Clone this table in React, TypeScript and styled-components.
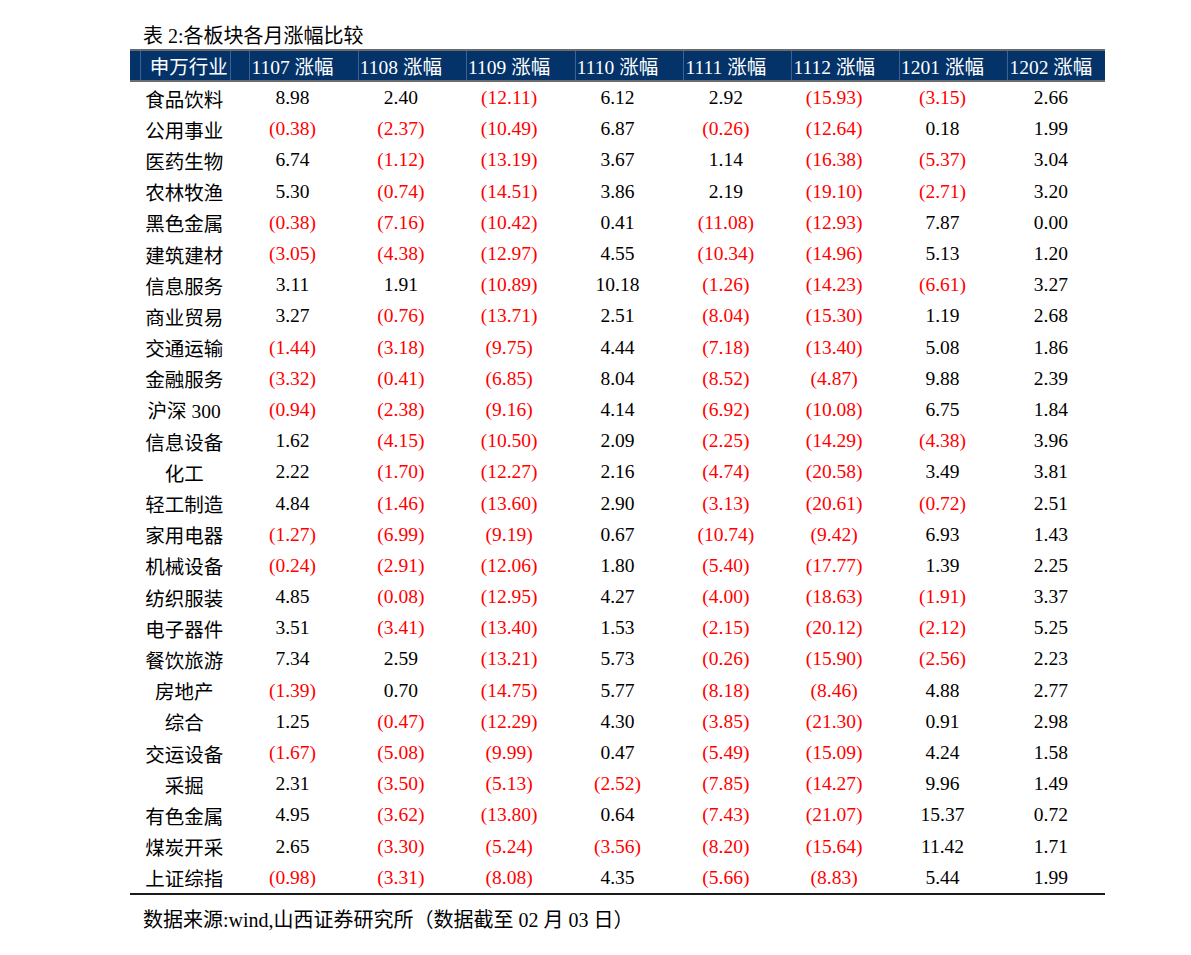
import styled, { createGlobalStyle } from "styled-components";

const GlobalStyle = createGlobalStyle`
  html, body {
    margin: 0;
    padding: 0;
    background: #ffffff;
  }
`;

const FONT = `"Liberation Serif", "Noto Sans CJK SC", serif`;

const Page = styled.div`
  width: 1191px;
  height: 955px;
  box-sizing: border-box;
  padding: 24px 0 0 130px;
  font-family: ${FONT};
  color: #000;
`;

const Title = styled.div`
  padding-left: 13px;
  font-size: 20px;
  line-height: 25px;
  height: 25px;
`;

const Table = styled.div`
  width: 975px;
  border-bottom: 2px solid #1a1a1a;
`;

const HeaderRow = styled.div`
  display: grid;
  grid-template-columns: repeat(9, 1fr);
  height: 29px;
  background: #04336a;
  border-top: 2px solid #6b6b6b;
  border-bottom: 2px solid #6b6b6b;
`;

const HeaderCell = styled.div<{ $first?: boolean }>`
  display: flex;
  align-items: center;
  justify-content: center;
  color: #ffffff;
  font-size: 19.5px;
  white-space: nowrap;
  border-left: ${(p) => (p.$first ? "1px solid #3f6190" : "none")};
  margin-left: ${(p) => (p.$first ? "10px" : "0")};
`;

const HeaderText = styled.span<{ $first?: boolean }>`
  height: 100%;
  display: flex;
  align-items: center;
  padding: 0 2px 0 1px;
  border-left: ${(p) => (p.$first ? "none" : "1px solid #3f6190")};
  border-right: ${(p) => (p.$first ? "1px solid #3f6190" : "none")};
`;

const Row = styled.div`
  display: grid;
  grid-template-columns: repeat(9, 1fr);
  height: 31.2px;
  padding-top: 1px;
  box-sizing: border-box;
`;

const Cell = styled.div<{ $neg?: boolean }>`
  display: flex;
  align-items: center;
  justify-content: center;
  font-size: 19.5px;
  white-space: nowrap;
  color: ${(p) => (p.$neg ? "#ff0000" : "#000000")};
`;

const Source = styled.div`
  padding-left: 13px;
  margin-top: 13px;
  font-size: 20px;
  line-height: 25px;
`;

const months = ["1107", "1108", "1109", "1110", "1111", "1112", "1201", "1202"];

const rows: [string, string[]][] = [
  ["食品饮料", ["8.98", "2.40", "(12.11)", "6.12", "2.92", "(15.93)", "(3.15)", "2.66"]],
  ["公用事业", ["(0.38)", "(2.37)", "(10.49)", "6.87", "(0.26)", "(12.64)", "0.18", "1.99"]],
  ["医药生物", ["6.74", "(1.12)", "(13.19)", "3.67", "1.14", "(16.38)", "(5.37)", "3.04"]],
  ["农林牧渔", ["5.30", "(0.74)", "(14.51)", "3.86", "2.19", "(19.10)", "(2.71)", "3.20"]],
  ["黑色金属", ["(0.38)", "(7.16)", "(10.42)", "0.41", "(11.08)", "(12.93)", "7.87", "0.00"]],
  ["建筑建材", ["(3.05)", "(4.38)", "(12.97)", "4.55", "(10.34)", "(14.96)", "5.13", "1.20"]],
  ["信息服务", ["3.11", "1.91", "(10.89)", "10.18", "(1.26)", "(14.23)", "(6.61)", "3.27"]],
  ["商业贸易", ["3.27", "(0.76)", "(13.71)", "2.51", "(8.04)", "(15.30)", "1.19", "2.68"]],
  ["交通运输", ["(1.44)", "(3.18)", "(9.75)", "4.44", "(7.18)", "(13.40)", "5.08", "1.86"]],
  ["金融服务", ["(3.32)", "(0.41)", "(6.85)", "8.04", "(8.52)", "(4.87)", "9.88", "2.39"]],
  ["沪深 300", ["(0.94)", "(2.38)", "(9.16)", "4.14", "(6.92)", "(10.08)", "6.75", "1.84"]],
  ["信息设备", ["1.62", "(4.15)", "(10.50)", "2.09", "(2.25)", "(14.29)", "(4.38)", "3.96"]],
  ["化工", ["2.22", "(1.70)", "(12.27)", "2.16", "(4.74)", "(20.58)", "3.49", "3.81"]],
  ["轻工制造", ["4.84", "(1.46)", "(13.60)", "2.90", "(3.13)", "(20.61)", "(0.72)", "2.51"]],
  ["家用电器", ["(1.27)", "(6.99)", "(9.19)", "0.67", "(10.74)", "(9.42)", "6.93", "1.43"]],
  ["机械设备", ["(0.24)", "(2.91)", "(12.06)", "1.80", "(5.40)", "(17.77)", "1.39", "2.25"]],
  ["纺织服装", ["4.85", "(0.08)", "(12.95)", "4.27", "(4.00)", "(18.63)", "(1.91)", "3.37"]],
  ["电子器件", ["3.51", "(3.41)", "(13.40)", "1.53", "(2.15)", "(20.12)", "(2.12)", "5.25"]],
  ["餐饮旅游", ["7.34", "2.59", "(13.21)", "5.73", "(0.26)", "(15.90)", "(2.56)", "2.23"]],
  ["房地产", ["(1.39)", "0.70", "(14.75)", "5.77", "(8.18)", "(8.46)", "4.88", "2.77"]],
  ["综合", ["1.25", "(0.47)", "(12.29)", "4.30", "(3.85)", "(21.30)", "0.91", "2.98"]],
  ["交运设备", ["(1.67)", "(5.08)", "(9.99)", "0.47", "(5.49)", "(15.09)", "4.24", "1.58"]],
  ["采掘", ["2.31", "(3.50)", "(5.13)", "(2.52)", "(7.85)", "(14.27)", "9.96", "1.49"]],
  ["有色金属", ["4.95", "(3.62)", "(13.80)", "0.64", "(7.43)", "(21.07)", "15.37", "0.72"]],
  ["煤炭开采", ["2.65", "(3.30)", "(5.24)", "(3.56)", "(8.20)", "(15.64)", "11.42", "1.71"]],
  ["上证综指", ["(0.98)", "(3.31)", "(8.08)", "4.35", "(5.66)", "(8.83)", "5.44", "1.99"]],
];

export default function App() {
  return (
    <>
      <GlobalStyle />
      <Page>
        <Title>表 2:各板块各月涨幅比较</Title>
        <Table>
          <HeaderRow>
            <HeaderCell $first>
              <HeaderText $first>申万行业</HeaderText>
            </HeaderCell>
            {months.map((m) => (
              <HeaderCell key={m}>
                <HeaderText>{m} 涨幅</HeaderText>
              </HeaderCell>
            ))}
          </HeaderRow>
          {rows.map(([name, values]) => (
            <Row key={name}>
              <Cell>{name}</Cell>
              {values.map((v, i) => (
                <Cell key={i} $neg={v.startsWith("(")}>
                  {v}
                </Cell>
              ))}
            </Row>
          ))}
        </Table>
        <Source>数据来源:wind,山西证券研究所（数据截至 02 月 03 日）</Source>
      </Page>
    </>
  );
}
